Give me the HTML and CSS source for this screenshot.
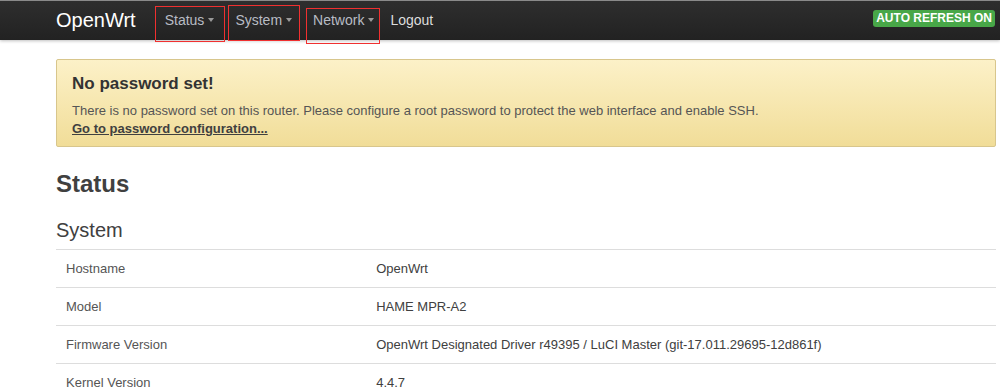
FILE: index.html
```html
<!DOCTYPE html>
<html lang="en">
<head>
    <meta charset="UTF-8">
    <title>OpenWrt - Overview - LuCI</title>
    <link rel="stylesheet" href="styles.css">
</head>
<body>
    <header class="navbar">
        <div class="container nav-inner">
            <a class="brand" href="#">OpenWrt</a>
            <ul class="nav">
                <li class="nav-item">
                    <a class="nav-link" href="#">Status<span class="caret"></span></a>
                    <span class="mark mark-status"></span>
                </li>
                <li class="nav-item">
                    <a class="nav-link" href="#">System<span class="caret"></span></a>
                    <span class="mark mark-system"></span>
                </li>
                <li class="nav-item">
                    <a class="nav-link" href="#">Network<span class="caret"></span></a>
                    <span class="mark mark-network"></span>
                </li>
                <li class="nav-item">
                    <a class="nav-link logout" href="#">Logout</a>
                </li>
            </ul>
            <span class="label-refresh">AUTO REFRESH ON</span>
        </div>
    </header>

    <main class="container main">
        <div class="alert">
            <h4>No password set!</h4>
            <p>There is no password set on this router. Please configure a root password to protect the web interface and enable SSH.</p>
            <p><a class="alert-link" href="#">Go to password configuration...</a></p>
        </div>

        <h2 class="page-title">Status</h2>

        <h3 class="section-title">System</h3>
        <table class="info-table">
            <tr><td class="key">Hostname</td><td>OpenWrt</td></tr>
            <tr><td class="key">Model</td><td>HAME MPR-A2</td></tr>
            <tr><td class="key">Firmware Version</td><td>OpenWrt Designated Driver r49395 / LuCI Master (git-17.011.29695-12d861f)</td></tr>
            <tr><td class="key">Kernel Version</td><td>4.4.7</td></tr>
        </table>
    </main>
</body>
</html>
```

FILE: styles.css
```css
* {
    margin: 0;
    padding: 0;
    box-sizing: border-box;
}

body {
    font-family: 'Liberation Sans', Arial, sans-serif;
    font-size: 13px;
    color: #404040;
    background: #fff;
    overflow: hidden;
}

a {
    text-decoration: none;
}

.container {
    width: 940px;
    margin-left: 56px;
}

/* top bar */
.navbar {
    height: 40px;
    border-top: 1px solid #8a8a8a;
    background: linear-gradient(#2e2e2e, #222);
    box-shadow: 0 1px 3px rgba(0, 0, 0, 0.25);
    position: relative;
    z-index: 2;
}

.nav-inner {
    display: flex;
    align-items: center;
    height: 39px;
}

.brand {
    color: #fff;
    font-size: 20px;
    margin-right: 19px;
    line-height: 39px;
}

.nav {
    display: flex;
    list-style: none;
}

.nav-item {
    position: relative;
}

.nav-link {
    display: block;
    padding: 0 11px 0 10px;
    line-height: 39px;
    font-size: 14px;
    color: #b8bcc4;
}

.nav-link.logout {
    color: #ddd;
    padding-left: 5px;
}

.caret {
    display: inline-block;
    margin-left: 4px;
    vertical-align: middle;
    border-left: 3.5px solid transparent;
    border-right: 3.5px solid transparent;
    border-top: 4px solid #999;
    position: relative;
    top: -1px;
}

/* red annotation boxes */
.mark {
    position: absolute;
    border: 1px solid #f03030;
    height: 36px;
    pointer-events: none;
}

.mark-status {
    left: 0;
    top: 5px;
    width: 70px;
}

.mark-system {
    left: 3px;
    top: 4px;
    width: 72px;
}

.mark-network {
    left: 3px;
    top: 7px;
    width: 74px;
}

.label-refresh {
    margin-left: auto;
    margin-right: 1px;
    align-self: flex-start;
    margin-top: 9px;
    background: #48a748;
    color: #fff;
    font-size: 12px;
    font-weight: bold;
    line-height: 15px;
    padding: 1px 3px;
    border-radius: 3px;
}

/* content */
.main {
    padding-top: 19px;
}

.alert {
    border: 1px solid #d8c68c;
    border-radius: 2px;
    background: linear-gradient(#fcf1c8, #f1dd98);
    padding: 14px 15px 8px;
    color: #555;
}

.alert h4 {
    font-size: 17px;
    line-height: 20px;
    color: #333;
    margin-bottom: 8px;
}

.alert p {
    font-size: 13px;
    line-height: 18px;
}

.alert-link {
    color: #404040;
    font-weight: bold;
    text-decoration: underline;
}

.page-title {
    font-size: 24px;
    line-height: 30px;
    font-weight: bold;
    color: #404040;
    margin-top: 22px;
}

.section-title {
    font-size: 20px;
    line-height: 24px;
    font-weight: normal;
    color: #404040;
    margin-top: 19px;
    margin-bottom: 7px;
}

.info-table {
    width: 100%;
    border-collapse: collapse;
}

.info-table td {
    height: 38px;
    padding: 0 10px;
    border-top: 1px solid #ddd;
    font-size: 13px;
    color: #404040;
    vertical-align: middle;
}

.info-table td.key {
    width: 33%;
    color: #555;
}
```
